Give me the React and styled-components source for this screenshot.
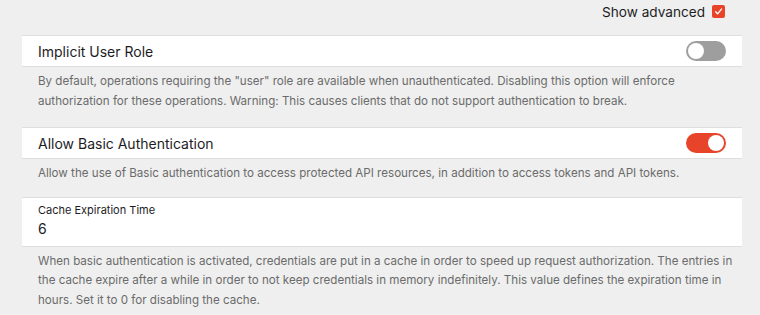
import React from "react";
import styled, { createGlobalStyle } from "styled-components";

const Global = createGlobalStyle`
  html, body { margin: 0; padding: 0; background: #efefef; }
  body { font-family: Inter, "Helvetica Neue", Arial, sans-serif; color: #1d1d1f; }
`;

const Page = styled.div`
  width: 760px;
  height: 315px;
  overflow: hidden;
  padding: 0 18px 0 22px;
  box-sizing: border-box;
  display: flex;
  flex-direction: column;
`;

const TopBar = styled.div`
  display: flex;
  justify-content: flex-end;
  align-items: center;
  gap: 7px;
  height: 23px;
  padding-right: 17px;
  margin-bottom: 12px;
  font-size: 13.6px;
`;

const Check = styled.span`
  width: 13px;
  height: 13px;
  border-radius: 2px;
  background: #e8442a;
  display: inline-flex;
  align-items: center;
  justify-content: center;
`;

const Section = styled.section`
  display: flex;
  flex-direction: column;
  margin-bottom: ${(p) => p.$gap || 0}px;
`;

const Panel = styled.div`
  background: #fff;
  border-top: 1px solid #dedede;
  border-bottom: 1px solid #dedede;
  padding: ${(p) => (p.$field ? "5px 16px 6px" : "0 16px")};
  height: ${(p) => (p.$field ? "auto" : "30px")};
  display: flex;
  align-items: center;
  justify-content: space-between;
`;

const Title = styled.div`
  font-size: 14px;
  color: #1d1d1f;
`;

const Field = styled.div`
  display: flex;
  flex-direction: column;
`;

const FieldLabel = styled.div`
  font-size: 11px;
  line-height: 14px;
  color: #1d1d1f;
`;

const FieldValue = styled.div`
  font-size: 14px;
  line-height: 22px;
  margin-top: 1px;
  color: #1d1d1f;
`;

const Desc = styled.p`
  margin: 0;
  padding: 5px 2px 0 16px;
  font-size: 11.6px;
  line-height: 19.5px;
  color: #6b6b6b;
`;

const Toggle = styled.span`
  width: 40px;
  height: 20px;
  border-radius: 10px;
  background: ${(p) => (p.$on ? "#e8442a" : "#9e9e9e")};
  display: flex;
  align-items: center;
  justify-content: ${(p) => (p.$on ? "flex-end" : "flex-start")};
  padding: 2px;
  box-sizing: border-box;
`;

const Knob = styled.span`
  width: 16px;
  height: 16px;
  border-radius: 50%;
  background: #fff;
`;

export default function App() {
  return (
    <>
      <Global />
      <Page>
        <TopBar>
          <span>Show advanced</span>
          <Check>
            <svg width="9" height="9" viewBox="0 0 10 10">
              <path d="M1.8 5.3 L4 7.6 L8.3 2.3" fill="none" stroke="#fff" strokeWidth="1.5" strokeLinecap="round" strokeLinejoin="round" />
            </svg>
          </Check>
        </TopBar>
        <Section $gap={16}>
          <Panel>
            <Title>Implicit User Role</Title>
            <Toggle><Knob /></Toggle>
          </Panel>
          <Desc>
            By default, operations requiring the "user" role are available when unauthenticated. Disabling this option will enforce authorization for these operations. Warning: This causes clients that do not support authentication to break.
          </Desc>
        </Section>
        <Section $gap={13}>
          <Panel>
            <Title>Allow Basic Authentication</Title>
            <Toggle $on><Knob /></Toggle>
          </Panel>
          <Desc>
            Allow the use of Basic authentication to access protected API resources, in addition to access tokens and API tokens.
          </Desc>
        </Section>
        <Section>
          <Panel $field>
            <Field>
              <FieldLabel>Cache Expiration Time</FieldLabel>
              <FieldValue>6</FieldValue>
            </Field>
          </Panel>
          <Desc>
            When basic authentication is activated, credentials are put in a cache in order to speed up request authorization. The entries in the cache expire after a while in order to not keep credentials in memory indefinitely. This value defines the expiration time in hours. Set it to 0 for disabling the cache.
          </Desc>
        </Section>
      </Page>
    </>
  );
}
